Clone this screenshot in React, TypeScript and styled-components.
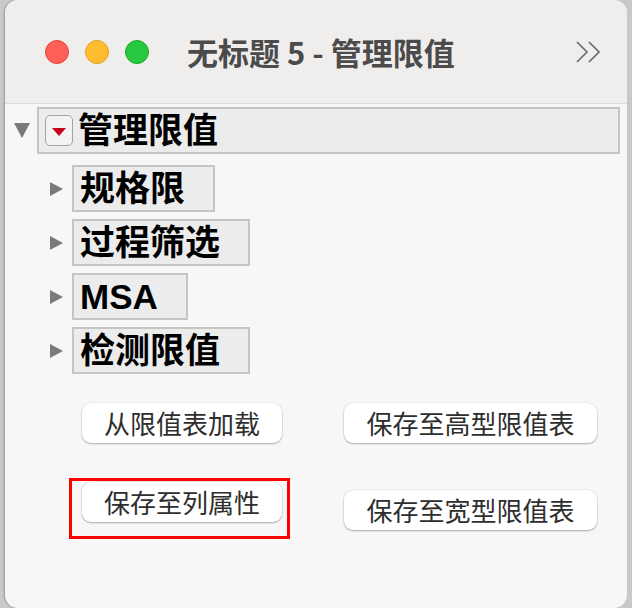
import React from 'react';
import styled, { createGlobalStyle } from 'styled-components';

const GlobalStyle = createGlobalStyle`
  body {
    margin: 0;
    background: #c9c9c9;
    font-family: "Noto Sans CJK SC", "Liberation Sans", sans-serif;
  }
`;

const children = ['规格限', '过程筛选', 'MSA', '检测限值'];

const App: React.FC = () => {
  return <>
    <GlobalStyle />
    <Window>
      <TitleBar>
        <Lights>
          <Light color="#fe5f57" edge="#e0443e" />
          <Light color="#febc2e" edge="#dea123" />
          <Light color="#28c840" edge="#1aab29" />
        </Lights>
        <Title>无标题 5 - 管理限值</Title>
        <More width="27" height="24" viewBox="0 0 27 24">
          <path d="M2 2 L12 12 L2 22 M14 2 L24 12 L14 22" fill="none" stroke="#6c6c6c" strokeWidth="1.7" />
        </More>
      </TitleBar>
      <Body>
        <RootRow>
          <DownToggle />
          <HeaderBox>
            <MenuButton><RedArrow /></MenuButton>
            <HeaderText>管理限值</HeaderText>
          </HeaderBox>
        </RootRow>
        <ChildList>
          {children.map(c => (
            <ChildRow key={c}>
              <RightToggle />
              <NodeBox>
                <HeaderText>{c}</HeaderText>
              </NodeBox>
            </ChildRow>
          ))}
        </ChildList>
        <Buttons>
          <Cell inset>
            <Button>从限值表加载</Button>
          </Cell>
          <Cell>
            <Button>保存至高型限值表</Button>
          </Cell>
          <Highlight>
            <Button>保存至列属性</Button>
          </Highlight>
          <Cell offset={12}>
            <Button>保存至宽型限值表</Button>
          </Cell>
        </Buttons>
      </Body>
    </Window>
  </>;
};

export default App;

const Window = styled.div`
  margin-left: 5px;
  width: 622px;
  height: 608px;
  border-radius: 13px;
  background: #f7f7f7;
  overflow: hidden;
  box-shadow: -1px 0 2px rgba(0, 0, 0, 0.25);
`;

const TitleBar = styled.div`
  height: 104px;
  box-sizing: border-box;
  background: #efeeec;
  border-bottom: 1px solid #dcdcdc;
  display: flex;
  align-items: center;
  padding: 0 25px 0 40px;
`;

const Lights = styled.div`
  display: flex;
  gap: 16px;
`;

const Light = styled.span<{ color: string; edge: string }>`
  width: 24px;
  height: 24px;
  box-sizing: border-box;
  border-radius: 50%;
  background: ${p => p.color};
  border: 1px solid ${p => p.edge};
`;

const Title = styled.div`
  margin-left: 38px;
  font-size: 31px;
  font-weight: 700;
  color: #4b4b4b;
`;

const More = styled.svg`
  margin-left: auto;
`;

const Body = styled.div`
  padding: 3px 7px 0 9px;
`;

const RootRow = styled.div`
  display: flex;
  align-items: center;
`;

const DownToggle = styled.span`
  width: 0;
  height: 0;
  border-left: 8.5px solid transparent;
  border-right: 8.5px solid transparent;
  border-top: 15px solid #7a7a7a;
  margin-right: 7px;
`;

const HeaderBox = styled.div`
  flex: 1;
  height: 47px;
  box-sizing: border-box;
  border: 2px solid #c6c6c0;
  background: #ececec;
  display: flex;
  align-items: center;
  padding-left: 6px;
`;

const MenuButton = styled.span`
  width: 28px;
  height: 31px;
  box-sizing: border-box;
  border: 1.5px solid #a3a3a3;
  border-radius: 5px;
  background: #f2f2f2;
  display: flex;
  align-items: center;
  justify-content: center;
  margin-right: 5px;
`;

const RedArrow = styled.span`
  width: 0;
  height: 0;
  margin-top: 2px;
  border-left: 7.5px solid transparent;
  border-right: 7.5px solid transparent;
  border-top: 8px solid #c8001e;
`;

const HeaderText = styled.span`
  font-family: "Liberation Sans", "Noto Sans CJK SC", sans-serif;
  font-size: 35px;
  font-weight: 700;
  line-height: 1;
  color: #000;
`;

const ChildList = styled.div`
  display: flex;
  flex-direction: column;
  gap: 7px;
  margin-top: 11px;
  padding-left: 36px;
`;

const ChildRow = styled.div`
  display: flex;
  align-items: center;
`;

const RightToggle = styled.span`
  width: 0;
  height: 0;
  border-top: 7.5px solid transparent;
  border-bottom: 7.5px solid transparent;
  border-left: 13px solid #7a7a7a;
  margin-right: 9px;
`;

const NodeBox = styled.div`
  height: 47px;
  box-sizing: border-box;
  border: 2px solid #c6c6c0;
  background: #ececec;
  display: flex;
  align-items: center;
  padding: 0 28px 0 6px;
`;

const Buttons = styled.div`
  display: grid;
  grid-template-columns: 221px 253px;
  column-gap: 54px;
  row-gap: 35px;
  align-items: start;
  margin-top: 29px;
  padding-left: 55px;
`;

const Cell = styled.div<{ offset?: number; inset?: boolean }>`
  display: flex;
  margin-top: ${p => p.offset || 0}px;
  padding: ${p => (p.inset ? '0 8px 0 13px' : '0')};
`;

const Highlight = styled.div`
  display: flex;
  border: 3px solid #ff0000;
  padding: 1px 5px 14px 10px;
`;

const Button = styled.button`
  flex: 1;
  height: 40px;
  border: none;
  border-radius: 9px;
  background: #fff;
  box-shadow: 0 0 0 0.5px rgba(0, 0, 0, 0.08), 0 1px 2px rgba(0, 0, 0, 0.28);
  font-family: "Noto Sans CJK SC", sans-serif;
  font-size: 26px;
  color: #2e2e2e;
  padding: 0;
  line-height: 1;
`;
